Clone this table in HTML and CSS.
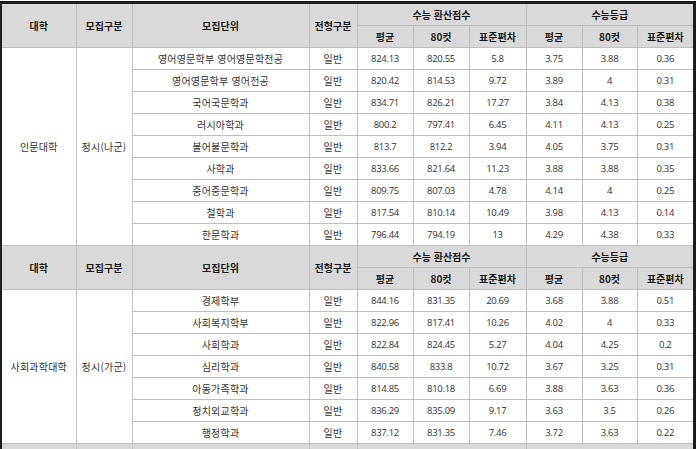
FILE: index.html
```html
<!DOCTYPE html>
<html lang="ko">
<head>
<meta charset="utf-8">
<link rel="stylesheet" href="styles.css">
</head>
<body>
<div class="frame">
<table class="grid">
<colgroup>
<col class="c1"><col class="c2"><col class="c3"><col class="c4">
<col class="c5"><col class="c6"><col class="c7"><col class="c8"><col class="c9"><col class="c10">
</colgroup>
<tbody>
<tr class="hd">
<th rowspan="2">대학</th><th rowspan="2">모집구분</th><th rowspan="2">모집단위</th><th rowspan="2">전형구분</th>
<th colspan="3">수능 환산점수</th><th colspan="3">수능등급</th>
</tr>
<tr class="hd">
<th>평균</th><th>80컷</th><th>표준편차</th><th>평균</th><th>80컷</th><th>표준편차</th>
</tr>
<tr><td rowspan="9" class="ko">인문대학</td><td rowspan="9" class="ko">정시(나군)</td><td class="ko">영어영문학부 영어영문학전공</td><td class="ko">일반</td><td>824.13</td><td>820.55</td><td>5.8</td><td>3.75</td><td>3.88</td><td>0.36</td></tr>
<tr><td class="ko">영어영문학부 영어전공</td><td class="ko">일반</td><td>820.42</td><td>814.53</td><td>9.72</td><td>3.89</td><td>4</td><td>0.31</td></tr>
<tr><td class="ko">국어국문학과</td><td class="ko">일반</td><td>834.71</td><td>826.21</td><td>17.27</td><td>3.84</td><td>4.13</td><td>0.38</td></tr>
<tr><td class="ko">러시아학과</td><td class="ko">일반</td><td>800.2</td><td>797.41</td><td>6.45</td><td>4.11</td><td>4.13</td><td>0.25</td></tr>
<tr><td class="ko">불어불문학과</td><td class="ko">일반</td><td>813.7</td><td>812.2</td><td>3.94</td><td>4.05</td><td>3.75</td><td>0.31</td></tr>
<tr><td class="ko">사학과</td><td class="ko">일반</td><td>833.66</td><td>821.64</td><td>11.23</td><td>3.88</td><td>3.88</td><td>0.35</td></tr>
<tr><td class="ko">중어중문학과</td><td class="ko">일반</td><td>809.75</td><td>807.03</td><td>4.78</td><td>4.14</td><td>4</td><td>0.25</td></tr>
<tr><td class="ko">철학과</td><td class="ko">일반</td><td>817.54</td><td>810.14</td><td>10.49</td><td>3.98</td><td>4.13</td><td>0.14</td></tr>
<tr><td class="ko">한문학과</td><td class="ko">일반</td><td>796.44</td><td>794.19</td><td>13</td><td>4.29</td><td>4.38</td><td>0.33</td></tr>
<tr class="hd">
<th rowspan="2">대학</th><th rowspan="2">모집구분</th><th rowspan="2">모집단위</th><th rowspan="2">전형구분</th>
<th colspan="3">수능 환산점수</th><th colspan="3">수능등급</th>
</tr>
<tr class="hd">
<th>평균</th><th>80컷</th><th>표준편차</th><th>평균</th><th>80컷</th><th>표준편차</th>
</tr>
<tr><td rowspan="7" class="ko">사회과학대학</td><td rowspan="7" class="ko">정시(가군)</td><td class="ko">경제학부</td><td class="ko">일반</td><td>844.16</td><td>831.35</td><td>20.69</td><td>3.68</td><td>3.88</td><td>0.51</td></tr>
<tr><td class="ko">사회복지학부</td><td class="ko">일반</td><td>822.96</td><td>817.41</td><td>10.26</td><td>4.02</td><td>4</td><td>0.33</td></tr>
<tr><td class="ko">사회학과</td><td class="ko">일반</td><td>822.84</td><td>824.45</td><td>5.27</td><td>4.04</td><td>4.25</td><td>0.2</td></tr>
<tr><td class="ko">심리학과</td><td class="ko">일반</td><td>840.58</td><td>833.8</td><td>10.72</td><td>3.67</td><td>3.25</td><td>0.31</td></tr>
<tr><td class="ko">아동가족학과</td><td class="ko">일반</td><td>814.85</td><td>810.18</td><td>6.69</td><td>3.88</td><td>3.63</td><td>0.36</td></tr>
<tr><td class="ko">정치외교학과</td><td class="ko">일반</td><td>836.29</td><td>835.09</td><td>9.17</td><td>3.63</td><td>3.5</td><td>0.26</td></tr>
<tr><td class="ko">행정학과</td><td class="ko">일반</td><td>837.12</td><td>831.35</td><td>7.46</td><td>3.72</td><td>3.63</td><td>0.22</td></tr>
<tr class="hd">
<th rowspan="2"></th><th rowspan="2"></th><th rowspan="2"></th><th rowspan="2"></th>
<th colspan="3"></th><th colspan="3"></th>
</tr>
</tbody>
</table>
</div>
</body>
</html>
```

FILE: styles.css
```css
html, body {
  margin: 0;
  padding: 0;
  background: #ffffff;
}
body {
  padding-top: 1px;
  font-family: "Noto Sans CJK KR", "Open Sans", sans-serif;
  color: #333333;
}
.frame {
  width: 691px;
  border-top: 3px solid #1c1c1c;
  border-left: 2px solid #1c1c1c;
  border-right: 3px solid #1c1c1c;
  height: 460px;
  overflow: hidden;
}
.grid {
  width: 691px;
  table-layout: fixed;
  border-collapse: collapse;
  border-style: hidden;
}
.c1 { width: 74px; }
.c2 { width: 56px; }
.c3 { width: 177px; }
.c4 { width: 48px; }
.c5 { width: 56px; }
.c6 { width: 56px; }
.c7 { width: 57px; }
.c8 { width: 56px; }
.c9 { width: 55px; }
.c10 { width: 56px; }
.grid th,
.grid td {
  border: 1px solid #bfbfbf;
  height: 21px;
  padding: 0;
  text-align: center;
  vertical-align: middle;
  white-space: nowrap;
  line-height: 1;
}
.grid th {
  background: #d9d9d9;
  font-size: 10px;
  font-weight: 700;
  color: #1a1a1a;
}
.grid td {
  font-size: 9.5px;
  font-family: "Open Sans", "Noto Sans CJK KR", sans-serif;
  letter-spacing: -0.3px;
}
.grid td.ko {
  font-family: "Noto Sans CJK KR", sans-serif;
  font-size: 10px;
  letter-spacing: 0.2px;
}
```
